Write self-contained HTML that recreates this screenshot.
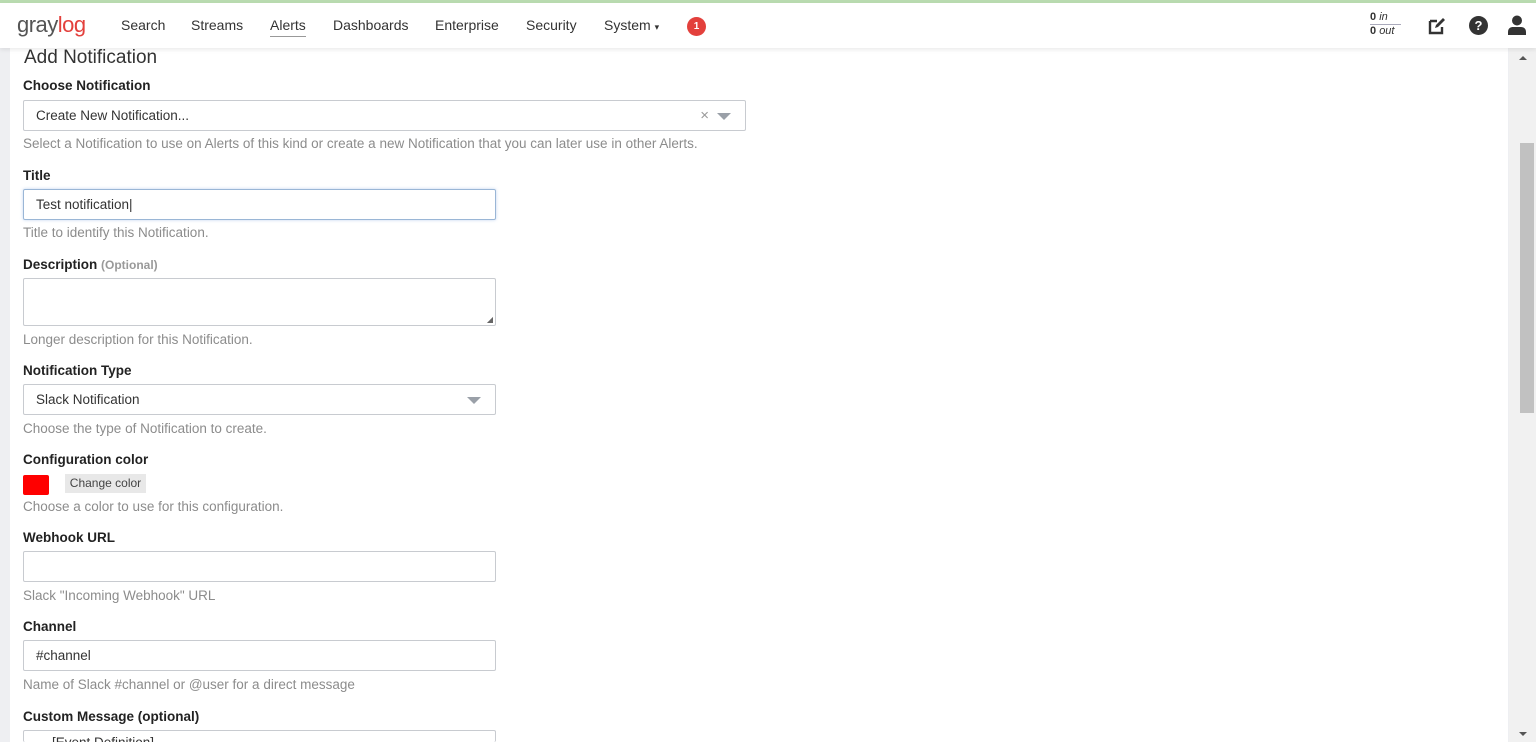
<!DOCTYPE html>
<html style="overflow:hidden;height:742px"><head><style>
*{box-sizing:border-box;margin:0;padding:0}
body{width:1536px;height:742px;overflow:hidden;background:#eeeff2;font-family:"Liberation Sans",sans-serif;position:relative;color:#1f1f1f}
.top{position:absolute;left:0;top:0;width:1536px;height:3px;background:#b9dbb0}
.nav{position:absolute;left:0;top:3px;width:1536px;height:45px;background:#fff;box-shadow:0 2px 4px rgba(0,0,0,.08);z-index:2}
.nav a{position:absolute;top:14px;font-size:14px;color:#333}
.main{position:absolute;left:10px;top:48px;width:1498px;height:694px;background:#fff}
.sb{position:absolute;left:1509px;top:48px;width:27px;height:694px;background:#f1f1f1}
.th{position:absolute;left:1520px;top:143px;width:14px;height:270px;background:#c1c1c1}
.a{position:absolute;left:23px}
h2{position:absolute;left:24px;top:47px;font-size:19px;font-weight:normal;color:#333}
.l{font-size:13.5px;font-weight:bold;color:#222}
.h{font-size:13.5px;color:#8c8c8c}
.in{position:absolute;left:23px;width:473px;height:31px;border:1px solid #c8cbd0;border-radius:2px;font-size:13.5px;color:#333;padding:7px 12px}
</style></head><body>
<div class="top"></div>
<div class="main"></div>
<div class="sb"><div style="position:absolute;left:10px;top:8px;border:4px solid transparent;border-bottom:4px solid #555;border-top:0"></div><div style="position:absolute;left:10px;top:684px;border:4px solid transparent;border-top:4px solid #555;border-bottom:0"></div></div>
<div class="th"></div>
<div class="nav">
<div style="position:absolute;left:17px;top:9px;font-size:22px;color:#555;letter-spacing:-0.5px">gray<span style="color:#e3403c">log</span></div>
<a style="left:121px">Search</a><a style="left:191px">Streams</a>
<a style="left:270px;border-bottom:1px solid #999;padding-bottom:3px">Alerts</a>
<a style="left:333px">Dashboards</a><a style="left:435px">Enterprise</a><a style="left:526px">Security</a><a style="left:604px">System <span style="font-size:9px">▾</span></a>
<div style="position:absolute;left:687px;top:14px;width:19px;height:19px;border-radius:50%;background:#e3403c;color:#fff;font-size:10px;font-weight:bold;text-align:center;line-height:19px">1</div>
<div style="position:absolute;left:1370px;top:8px;font-size:11px;line-height:13px;color:#333"><div style="border-bottom:1px solid #aab;width:31px"><b>0</b> <i>in</i></div><div><b>0</b> <i>out</i></div></div>
<svg style="position:absolute;left:1427px;top:13px" width="20" height="20" viewBox="0 0 20 20"><path d="M3 5h7M3 5v12h12v-6" stroke="#333" stroke-width="2.4" fill="none"/><path d="M8 12l1-3 7-7 2 2-7 7z" fill="#333"/></svg>
<div style="position:absolute;left:1469px;top:13px;width:19px;height:19px;border-radius:50%;background:#333;color:#fff;font-size:13px;font-weight:bold;text-align:center;line-height:19px">?</div>
<svg style="position:absolute;left:1508px;top:12px" width="18" height="20" viewBox="0 0 18 20"><circle cx="9" cy="5.5" r="5" fill="#333"/><path d="M0 20v-3c0-4 3-5 5-5h8c2 0 5 1 5 5v3z" fill="#333"/></svg>
</div>
<h2>Add Notification</h2>
<div class="a l" style="top:78px">Choose Notification</div>
<div class="in" style="top:100px;width:723px">Create New Notification...<span style="position:absolute;right:36px;top:6px;color:#999;font-size:15px">×</span><span style="position:absolute;right:14px;top:12px;border:7px solid transparent;border-top:7px solid #9aa0a8;border-bottom:0"></span></div>
<div class="a h" style="top:136px">Select a Notification to use on Alerts of this kind or create a new Notification that you can later use in other Alerts.</div>
<div class="a l" style="top:168px">Title</div>
<div class="in" style="top:189px;border-color:#9ab6d6;box-shadow:0 0 3px rgba(100,150,220,.4)">Test notification|</div>
<div class="a h" style="top:225px">Title to identify this Notification.</div>
<div class="a l" style="top:257px">Description <span style="color:#999;font-size:12px">(Optional)</span></div>
<div class="in" style="top:278px;height:48px"><span style="position:absolute;right:2px;bottom:1px;font-size:8px;color:#666">◢</span></div>
<div class="a h" style="top:332px">Longer description for this Notification.</div>
<div class="a l" style="top:363px">Notification Type</div>
<div class="in" style="top:384px">Slack Notification<span style="position:absolute;right:14px;top:12px;border:7px solid transparent;border-top:7px solid #9aa0a8;border-bottom:0"></span></div>
<div class="a h" style="top:421px">Choose the type of Notification to create.</div>
<div class="a l" style="top:452px">Configuration color</div>
<div style="position:absolute;left:23px;top:475px;width:26px;height:20px;background:#f00;border-radius:2px"></div>
<div style="position:absolute;left:65px;top:474px;width:81px;height:19px;background:#e8e8e8;font-size:12px;color:#444;text-align:center;line-height:19px">Change color</div>
<div class="a h" style="top:499px">Choose a color to use for this configuration.</div>
<div class="a l" style="top:530px">Webhook URL</div>
<div class="in" style="top:551px"></div>
<div class="a h" style="top:588px">Slack "Incoming Webhook" URL</div>
<div class="a l" style="top:619px">Channel</div>
<div class="in" style="top:640px">#channel</div>
<div class="a h" style="top:677px">Name of Slack #channel or @user for a direct message</div>
<div class="a l" style="top:709px">Custom Message (optional)</div>
<div class="in" style="top:730px;height:12px;border-bottom:0;overflow:hidden;padding-top:4px;padding-left:28px">[Event Definition]</div>
</body></html>
